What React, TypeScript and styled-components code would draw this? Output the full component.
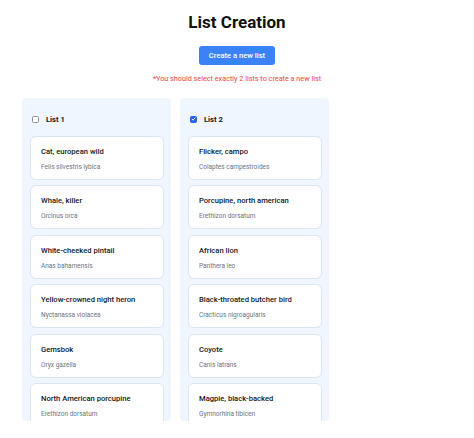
import React, { useState } from "react";
import styled, { createGlobalStyle } from "styled-components";

const GlobalStyle = createGlobalStyle`
  html, body { margin: 0; padding: 0; background: #ffffff; }
  body { font-family: Roboto, "Noto Sans", "Liberation Sans", sans-serif; color: #111827; }
  * { box-sizing: border-box; }
`;

const Page = styled.div`
  display: flex;
  flex-direction: column;
  width: 474px;
  height: 438px;
  overflow: hidden;
`;

const Header = styled.header`
  display: flex;
  flex-direction: column;
  align-items: center;
  padding-top: 11px;
`;

const Title = styled.h1`
  margin: 0;
  font-size: 17px;
  line-height: 22px;
  font-weight: 700;
  color: #111111;
`;

const CreateButton = styled.button`
  margin-top: 13px;
  width: 76px;
  height: 19px;
  border: none;
  border-radius: 3px;
  background: #3b82f6;
  color: #ffffff;
  font-family: inherit;
  font-size: 7.6px;
  font-weight: 500;
  padding: 0;
  cursor: pointer;
`;

const Warning = styled.p`
  margin: 9px 0 0;
  font-size: 7.25px;
  line-height: 9px;
  color: #ef4444;
`;

const Lists = styled.div`
  display: flex;
  gap: 9px;
  padding: 0 22px;
  margin-top: 14.5px;
`;

const Panel = styled.section`
  width: 149px;
  height: 323px;
  overflow: hidden;
  background: #eff6ff;
  border-radius: 4px;
  padding: 17px 7px 0 8px;
  display: flex;
  flex-direction: column;
`;

const PanelHeader = styled.label`
  display: flex;
  align-items: center;
  gap: 7px;
  height: 10px;
  padding-left: 2px;
  font-size: 7.6px;
  font-weight: 700;
  color: #111827;
  cursor: pointer;
`;

const HiddenInput = styled.input`
  position: absolute;
  opacity: 0;
  width: 0;
  height: 0;
  margin: 0;
`;

const Box = styled.span<{ $checked: boolean }>`
  width: 7px;
  height: 7px;
  flex: 0 0 7px;
  border-radius: 1.5px;
  border: 1px solid ${(p) => (p.$checked ? "#2563eb" : "#8a8f98")};
  background: ${(p) => (p.$checked ? "#2563eb" : "#ffffff")};
  display: flex;
  align-items: center;
  justify-content: center;
`;

const Cards = styled.div`
  display: flex;
  flex-direction: column;
  gap: 5.5px;
  margin-top: 12px;
`;

const Card = styled.div`
  flex: 0 0 auto;
  height: 44px;
  background: #ffffff;
  border: 1px solid #dbe5f3;
  border-radius: 6px;
  padding: 10px 10px 0;
  display: flex;
  flex-direction: column;
`;

const CardTitle = styled.div`
  font-size: 7.6px;
  line-height: 10px;
  font-weight: 500;
  color: #111827;
`;

const CardSub = styled.div`
  margin-top: 5px;
  font-size: 6.5px;
  line-height: 10px;
  color: #6b7280;
`;

type Item = { name: string; sci: string };

const list1: Item[] = [
  { name: "Cat, european wild", sci: "Felis silvestris lybica" },
  { name: "Whale, killer", sci: "Orcinus orca" },
  { name: "White-cheeked pintail", sci: "Anas bahamensis" },
  { name: "Yellow-crowned night heron", sci: "Nyctanassa violacea" },
  { name: "Gemsbok", sci: "Oryx gazella" },
  { name: "North American porcupine", sci: "Erethizon dorsatum" },
];

const list2: Item[] = [
  { name: "Flicker, campo", sci: "Colaptes campestroides" },
  { name: "Porcupine, north american", sci: "Erethizon dorsatum" },
  { name: "African lion", sci: "Panthera leo" },
  { name: "Black-throated butcher bird", sci: "Cracticus nigroagularis" },
  { name: "Coyote", sci: "Canis latrans" },
  { name: "Magpie, black-backed", sci: "Gymnorhina tibicen" },
];

const ListPanel: React.FC<{ title: string; items: Item[]; checked: boolean; onToggle: () => void }> = ({
  title,
  items,
  checked,
  onToggle,
}) => (
  <Panel>
    <PanelHeader>
      <HiddenInput type="checkbox" checked={checked} onChange={onToggle} />
      <Box $checked={checked}>
        {checked && (
          <svg width="6" height="6" viewBox="0 0 10 10" fill="none">
            <path d="M2 5.2 L4.2 7.4 L8.2 2.6" stroke="#ffffff" strokeWidth="1.8" strokeLinecap="round" strokeLinejoin="round" />
          </svg>
        )}
      </Box>
      <span>{title}</span>
    </PanelHeader>
    <Cards>
      {items.map((it) => (
        <Card key={it.name}>
          <CardTitle>{it.name}</CardTitle>
          <CardSub>{it.sci}</CardSub>
        </Card>
      ))}
    </Cards>
  </Panel>
);

export default function App() {
  const [sel, setSel] = useState<boolean[]>([false, true]);
  const toggle = (i: number) => setSel((s) => s.map((v, j) => (j === i ? !v : v)));
  return (
    <>
      <GlobalStyle />
      <Page>
        <Header>
          <Title>List Creation</Title>
          <CreateButton>Create a new list</CreateButton>
          <Warning>*You should select exactly 2 lists to create a new list</Warning>
        </Header>
        <Lists>
          <ListPanel title="List 1" items={list1} checked={sel[0]} onToggle={() => toggle(0)} />
          <ListPanel title="List 2" items={list2} checked={sel[1]} onToggle={() => toggle(1)} />
        </Lists>
      </Page>
    </>
  );
}
